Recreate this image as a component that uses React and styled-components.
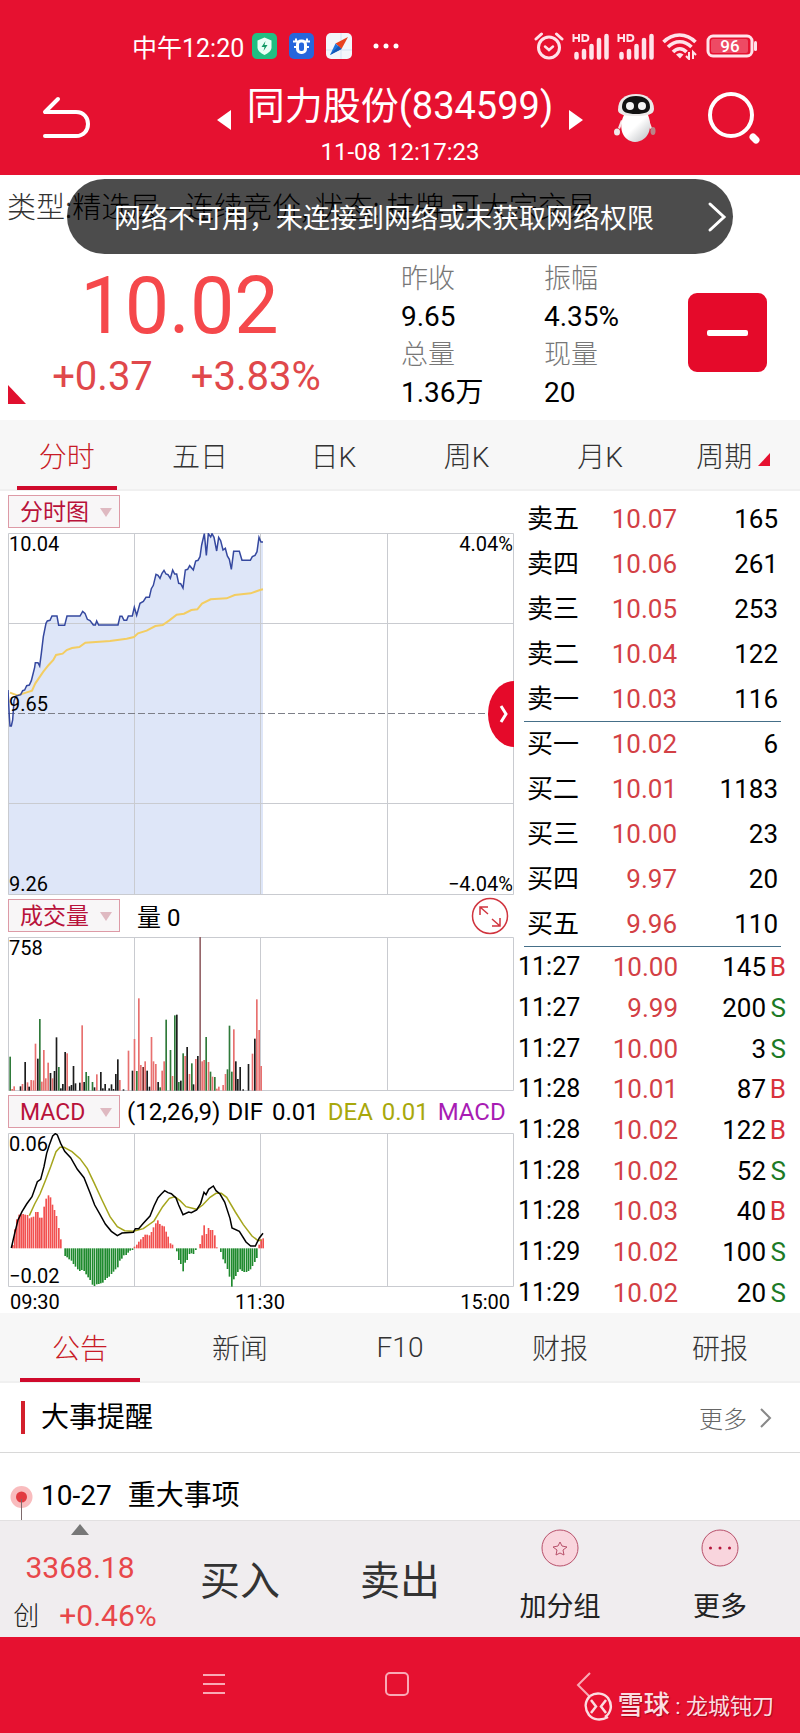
import React from 'react'
import styled, { createGlobalStyle, css } from 'styled-components'

const GlobalStyle = createGlobalStyle`
  * {
    box-sizing: border-box;
  }
  body {
    margin: 0;
    background-color: #fff;
    color: #000;
    font-family: Roboto, 'Noto Sans CJK SC', sans-serif;
    font-size: 28px;
  }
  button, select {
    margin: 0;
    padding: 0;
    border: 0;
    background: none;
    color: inherit;
    font: inherit;
  }
  svg {
    display: block;
    flex-shrink: 0;
  }
`

const RED = '#e61130'
const RISE = '#f5484b'
const PRICE = '#d34045'

/* header */

const Header = styled.header`
  background-color: ${RED};
  color: #fff;
`

const StatusBar = styled.div`
  display: flex;
  align-items: center;
  height: 76px;
  padding: 16px 42px 0 132px;
  font-size: 25px;
`

const StatusApps = styled.div`
  display: flex;
  align-items: center;
  gap: 12px;
  margin-left: 8px;
  flex: 1;
`

const StatusSignals = styled.div`
  display: flex;
  align-items: center;
  gap: 8px;
`

const TitleBar = styled.div`
  display: grid;
  grid-template-columns: 1fr auto 1fr;
  height: 99px;
`

const TitleSide = styled.div`
  display: flex;
  align-items: center;
  justify-content: space-between;
  padding: 0 40px 16px 41px;
`

const TitleRight = styled(TitleSide)`
  padding-left: 30px;
`

const StockNav = styled.div`
  display: flex;
  align-items: flex-start;
  gap: 16px;
`

const StepButton = styled.button`
  margin-top: 34px;
`

const StockTitle = styled.div`
  padding-top: 7px;
  text-align: center;
`

const StockName = styled.h1`
  margin: 0;
  font-size: 38px;
  font-weight: 400;
  line-height: 46px;
`

const StockTime = styled.div`
  font-size: 24px;
  line-height: 46px;
`

/* quote */

const QuoteArea = styled.section`
  position: relative;
`

const TypeLine = styled.p`
  margin: 0;
  padding: 11px 7px 3px;
  font-family: 'Noto Sans CJK SC', sans-serif;
  font-size: 29px;
  font-weight: 300;
  line-height: 38px;
  white-space: nowrap;
  span {
    color: #333;
  }
`

const Toast = styled.button`
  position: absolute;
  top: 4px;
  left: 67px;
  right: 67px;
  display: flex;
  align-items: center;
  justify-content: space-between;
  height: 75px;
  padding: 0 6px 0 47px;
  border-radius: 38px;
  background-color: rgba(0, 0, 0, 0.7);
  color: #fff;
  font-size: 27px;
  white-space: nowrap;
`

const Quote = styled.div`
  display: flex;
  height: 193px;
  padding-right: 33px;
`

const PriceBlock = styled.div`
  position: relative;
  flex: 1;
  display: flex;
  flex-direction: column;
  align-items: center;
  padding: 36px 42px 0 0;
  color: ${RISE};
`

const Price = styled.strong`
  font-size: 79px;
  font-weight: 400;
  line-height: 86px;
`

const Change = styled.div`
  display: flex;
  gap: 38px;
  margin-left: 14px;
  font-size: 40px;
  line-height: 56px;
  color: #e0484b;
`

const Corner = styled.svg`
  position: absolute;
  left: 8px;
  bottom: 16px;
`

const Stats = styled.dl`
  display: grid;
  grid-template-columns: 143px 144px;
  grid-auto-rows: 76px;
  margin: 0;
  padding-top: 33px;
  line-height: 38px;
`

const StatLabel = styled.dt`
  color: #777;
  font-size: 27px;
  font-weight: 300;
`

const StatValue = styled.dd`
  margin: 0;
`

const RemoveButton = styled.button`
  display: flex;
  align-items: center;
  justify-content: center;
  width: 79px;
  height: 79px;
  margin-top: 66px;
  border-radius: 9px;
  background-color: #e50a2a;
`

/* tabs */

const TabBar = styled.nav`
  display: grid;
  grid-template-columns: repeat(${({ $count }) => $count}, 1fr);
  height: ${({ $height }) => $height}px;
  background-color: #f7f7f7;
  border-bottom: 2px solid #f0f0f0;
`

const Tab = styled.button`
  position: relative;
  display: flex;
  align-items: center;
  justify-content: center;
  gap: 6px;
  color: ${({ $active }) => ($active ? '#c81a26' : '#333')};
  font-weight: 300;
  ${({ $active }) =>
    $active &&
    css`
      &::after {
        content: '';
        position: absolute;
        left: 12.5%;
        right: 12.5%;
        bottom: -1px;
        height: 4px;
        background-color: #cf0a2c;
      }
    `}
`

/* charts */

const Market = styled.main`
  display: flex;
`

const Charts = styled.section`
  flex: 1;
  min-width: 0;
  padding-left: 8px;
`

const ChartHead = styled.div`
  display: flex;
  align-items: center;
  height: 33px;
  margin: 4px 0 5px;
  font-size: 23px;
  white-space: nowrap;
`

const Picker = styled.label`
  position: relative;
  width: 112px;
  height: 33px;
  border: 1px solid #dd9aa6;
  background-color: #f8f6f7;
  color: #b8123a;
  select {
    appearance: none;
    width: 100%;
    height: 31px;
    padding: 2px 0 0 11px;
  }
  svg {
    position: absolute;
    top: 12px;
    right: 7px;
    pointer-events: none;
  }
`

const Readout = styled.span`
  margin-left: ${({ $gap }) => $gap || 9}px;
  color: ${({ $color }) => $color || '#000'};
  font-size: 24px;
`

const ExpandButton = styled.button`
  margin-left: auto;
  margin-right: 5px;
`

const Plot = styled.div`
  position: relative;
  height: ${({ $height }) => $height}px;
  > svg {
    width: 100%;
    height: 100%;
  }
`

const edges = {
  top: css`
    top: 1px;
  `,
  middle: css`
    bottom: 50%;
  `,
  bottom: css`
    bottom: 1px;
  `,
}

const AxisLabel = styled.span`
  position: absolute;
  ${({ $edge }) => edges[$edge]}
  ${({ $right }) => ($right ? 'right: 1px;' : 'left: 1px;')}
  font-size: 20px;
  line-height: 20px;
`

const Handle = styled.button`
  position: absolute;
  right: 0;
  top: 50%;
  display: flex;
  align-items: center;
  justify-content: center;
  width: 26px;
  height: 66px;
  padding-left: 6px;
  margin-top: -33px;
  border-radius: 26px 0 0 26px / 33px 0 0 33px;
  background-color: #e50a2a;
`

const TimeAxis = styled.div`
  display: grid;
  grid-template-columns: 1fr 1fr 1fr;
  padding: 4px 4px 0 2px;
  font-size: 20px;
  line-height: 22px;
  span:nth-child(2) {
    text-align: center;
  }
  span:nth-child(3) {
    text-align: right;
  }
`

/* order book */

const Book = styled.section`
  flex: 0 0 286px;
  padding-top: 6px;
  font-size: 26px;
`

const Table = styled.table`
  table-layout: fixed;
  border-collapse: collapse;
  line-height: 30px;
  td, th {
    padding: 0;
    font-weight: 400;
    text-align: right;
  }
  th {
    text-align: left;
  }
`

const Orders = styled(Table)`
  width: 257px;
  height: 225px;
  margin-left: 10px;
  border-bottom: 1px solid #456f88;
  th {
    width: 60px;
    padding-left: 3px;
  }
  td:last-child {
    padding-right: 3px;
  }
`

const Trades = styled(Table)`
  width: 268px;
  height: 366px;
  margin-left: 4px;
  th {
    width: 67px;
    font-size: 25px;
  }
`

const PriceCell = styled.td`
  width: 93px;
  color: ${PRICE};
`

const SideCell = styled.td`
  width: 20px;
  color: ${({ $side }) => ($side === 'B' ? '#d8333c' : '#1c7a26')};
`

/* events */

const EventHead = styled.div`
  display: flex;
  align-items: center;
  height: 70px;
  padding: 0 28px 0 21px;
  border-bottom: 1px solid #d8d8d8;
`

const EventTitle = styled.h2`
  flex: 1;
  margin: 0;
  padding-left: 16px;
  border-left: 4px solid #d3202c;
  font-size: 28px;
  font-weight: 400;
  line-height: 33px;
`

const MoreLink = styled.a`
  display: flex;
  align-items: center;
  gap: 12px;
  color: #666;
  font-size: 24px;
  font-weight: 300;
  text-decoration: none;
`

const EventItem = styled.div`
  display: flex;
  align-items: flex-end;
  gap: 8px;
  height: 67px;
  padding-left: 10px;
  line-height: 48px;
  time {
    margin-right: 8px;
  }
`

/* bottom */

const ActionBar = styled.footer`
  display: grid;
  grid-template-columns: repeat(5, 1fr);
  height: 117px;
  background-color: #f0edef;
  border-top: 1px solid #e2e0e1;
`

const IndexButton = styled.button`
  display: flex;
  flex-direction: column;
  align-items: center;
  padding-top: 3px;
  color: #e8474a;
  font-size: 30px;
  line-height: 44px;
  b {
    padding-top: 11px;
    font-weight: 400;
  }
`

const IndexChange = styled.span`
  display: flex;
  gap: 20px;
  margin-left: 10px;
  padding-top: 4px;
  small {
    color: #222;
    font-size: 26px;
    font-weight: 300;
  }
`

const TradeButton = styled.button`
  padding-bottom: 3px;
  color: #333;
  font-size: 40px;
`

const ToolButton = styled.button`
  display: flex;
  flex-direction: column;
  align-items: center;
  padding-top: 8px;
  font-size: 27px;
  line-height: 40px;
  gap: 20px;
  color: #222;
`

const SystemNav = styled.div`
  position: relative;
  display: flex;
  height: 96px;
  padding: 34px 208px 0 202px;
  justify-content: space-between;
  align-items: flex-start;
  background-color: ${RED};
`

const Watermark = styled.div`
  position: absolute;
  right: 26px;
  bottom: 10px;
  display: flex;
  align-items: center;
  gap: 5px;
  color: #fbdde1;
  font-size: 22px;
  line-height: 32px;
  text-shadow: 1px 1px 1px rgba(90, 0, 10, 0.5);
  b {
    font-size: 26px;
    font-weight: 500;
  }
`

/* [x, top] pairs, three units to a pixel */
const priceLine =
  '24,600 28,680 30,708 34,708 38,690 42,632 48,618 62,614 68,602 74,600 80,587 88,585 94,572 104,532 106,518 114,518 119,528 124,490 130,440 138,400 142,393 150,391 156,378 171,378 176,406 194,406 201,378 240,378 248,364 255,370 262,388 270,392 280,405 286,405 290,393 296,405 354,405 360,379 366,379 372,391 380,391 385,378 397,378 403,352 410,376 420,340 430,334 438,322 448,322 454,296 460,286 468,253 474,256 480,265 486,250 492,241 498,252 504,254 511,265 518,240 524,252 530,252 536,280 542,281 549,294 556,240 563,238 569,227 580,240 587,213 594,211 600,200 605,165 613,131 619,196 625,131 632,141 636,131 642,142 650,183 656,142 662,152 669,180 676,175 682,198 688,208 694,238 701,184 718,184 726,211 751,211 757,200 765,196 771,185 777,142 783,156 789,156'

const averageLine =
  '30,608 52,616 78,608 96,602 106,580 130,545 146,525 160,510 168,495 188,491 200,480 216,474 238,471 256,458 330,453 380,446 402,441 414,430 440,422 466,408 488,405 508,391 530,374 552,371 574,360 592,358 606,341 632,328 680,325 704,315 752,310 780,300 789,298'

const difLine =
  '34,474 44,430 54,390 66,365 80,342 96,320 112,275 122,268 132,230 140,190 148,165 158,138 166,131 172,135 182,160 194,184 212,203 232,238 252,263 270,308 284,345 300,373 316,402 334,424 352,437 366,429 400,427 406,416 416,416 430,400 450,378 462,348 474,323 484,312 494,302 504,308 514,311 528,324 536,345 549,374 566,366 574,368 590,360 602,340 612,307 618,314 626,298 640,288 648,302 660,312 674,336 690,385 696,414 718,424 738,456 752,468 766,468 778,444 789,430'

const deaLine =
  '88,377 104,342 120,312 136,272 152,230 168,185 180,172 192,172 216,185 240,206 262,236 282,278 306,330 330,380 352,410 374,422 400,424 430,416 462,393 488,350 508,325 524,320 540,332 558,350 590,358 608,345 630,322 648,310 664,310 680,322 706,366 730,404 756,438 774,452 784,450'

const volumeColors = { r: '#e8706f', g: '#2f7a3a', k: '#1c1c1c', d: '#7a2a2a', m: '#96666a' }

const volumes =
  '30,500g 36,597r 42,589r 61,589k 67,582r 75,516k 82,577r 87,590k 93,570r 100,571r 106,461r 113,506k 119,387g 125,575r 131,480r 137,565r 144,518r 151,549k 157,565r 163,543k 169,442k 176,531g 182,595k 188,582k 195,486k 201,490r 208,589k 214,585k 220,528k 226,580k 239,578k 246,406r 252,576k 258,546g 265,558g 277,576g 283,592k 290,553r 302,546k 308,595k 315,582k 327,595k 334,583k 340,597k 347,552k 353,508k 359,570r 370,598k 385,482r 397,542k 403,447r 410,543g 416,325r 422,525r 429,531d 435,514r 441,542k 448,590k 454,441r 460,514r 467,522r 474,576k 480,592g 486,542r 492,514r 498,389g 511,480g 517,558r 524,376g 530,374k 536,576g 542,572k 549,490g 555,498r 561,471k 568,552r 575,520g 580,583k 587,507r 593,498k 600,141m 606,514r 612,510r 618,441g 625,516r 631,545g 637,560r 644,561g 650,596r 656,590r 669,585r 676,552r 682,538g 688,407g 695,545g 701,418r 707,514k 713,567k 720,531k 729,598k 745,522k 757,491r 764,446k 770,328r 777,420r 783,528r'
    .split(' ')
    .map((item) => {
      const [x, rest] = item.split(',')
      return { x: Number(x), y: parseInt(rest, 10), color: volumeColors[rest.slice(-1)] }
    })

const macdBars =
  '38,465 44,418 50,388 57,374 63,373 69,372 75,374 82,375 88,385 94,382 100,380 107,366 113,366 119,383 125,383 132,350 138,326 145,316 151,322 157,344 163,360 169,378 176,414 182,448 195,498 201,502 207,508 214,512 220,522 226,530 233,538 239,543 245,540 252,543 258,553 264,562 270,570 277,584 283,588 290,583 296,582 302,580 308,578 315,570 321,564 327,560 334,552 340,545 346,538 353,532 359,512 365,506 371,496 378,495 384,488 390,482 397,480 403,470 410,464 416,455 422,448 429,441 435,434 441,434 448,436 454,426 460,412 467,400 473,391 479,402 486,407 492,409 498,425 504,440 511,460 517,464 530,484 536,510 542,522 549,544 555,518 561,510 568,492 574,490 580,492 587,480 600,462 606,436 612,406 619,432 625,414 631,420 637,420 644,436 650,472 662,486 669,508 675,520 682,537 688,560 695,590 701,568 707,558 713,546 720,538 726,543 732,546 739,546 745,543 751,538 757,528 764,516 770,504 777,464 783,448 789,445'
    .split(' ')
    .map((item) => item.split(',').map(Number))

const MACD_ZERO = 475

const asks = [
  ['卖五', '10.07', '165'],
  ['卖四', '10.06', '261'],
  ['卖三', '10.05', '253'],
  ['卖二', '10.04', '122'],
  ['卖一', '10.03', '116'],
]

const bids = [
  ['买一', '10.02', '6'],
  ['买二', '10.01', '1183'],
  ['买三', '10.00', '23'],
  ['买四', '9.97', '20'],
  ['买五', '9.96', '110'],
]

const trades = [
  ['11:27', '10.00', '145', 'B'],
  ['11:27', '9.99', '200', 'S'],
  ['11:27', '10.00', '3', 'S'],
  ['11:28', '10.01', '87', 'B'],
  ['11:28', '10.02', '122', 'B'],
  ['11:28', '10.02', '52', 'S'],
  ['11:28', '10.03', '40', 'B'],
  ['11:29', '10.02', '100', 'S'],
  ['11:29', '10.02', '20', 'S'],
]

const stats = [
  ['昨收', '9.65'],
  ['振幅', '4.35%'],
  ['总量', '1.36万'],
  ['现量', '20'],
]

const periods = ['分时', '五日', '日K', '周K', '月K', '周期']
const sections = ['公告', '新闻', 'F10', '财报', '研报']

function Signal() {
  return (
    <svg width="37" height="28" viewBox="0 0 37 28" fill="none" stroke="#ffe3ea">
      <path d="M1.5 2v8M7 2v8M1.5 6H7M10.5 3v6h2.5c4.500 0 4.500-6 0-6z" strokeWidth="2" />
      <path d="M4.500 25.500v-3.500M12 25.500v-6.500M19.500 25.500V14M27 25.500V8M34.500 25.500V4" strokeWidth="4.500" strokeLinecap="round" />
    </svg>
  )
}

function StatusIcons() {
  return (
    <StatusSignals>
      <svg width="30" height="28" viewBox="0 0 30 28" fill="none" stroke="#ffe3ea" strokeWidth="3" strokeLinecap="round">
        <circle cx="15" cy="15.500" r="10.500" />
        <path d="M2 7l5.500-5M28 7l-5.500-5" />
        <path d="M11 14.500l4 3.500 4-3.500" strokeWidth="2.500" />
      </svg>
      <Signal />
      <Signal />
      <svg width="36" height="28" viewBox="0 0 36 28" fill="none" stroke="#ffe3ea" strokeWidth="3.500">
        <path d="M1.500 10c9-9.500 23-9.500 32 0" />
        <path d="M6 15c7-7 16.500-7 23.500 0" />
        <path d="M11 20c4-4.500 9.500-4.500 13.500 0" />
        <path d="M14 22.500c2.500-2 5-2 7.500 0L18 26.500z" fill="#ffe3ea" stroke="none" />
        <path d="M27 20v7l-3-3M31 27v-7l3 3" strokeWidth="2" />
      </svg>
      <svg width="52" height="26" viewBox="0 0 52 26" role="img" aria-label="96">
        <rect x="2" y="3" width="44" height="20" rx="5" fill="none" stroke="#ffe3ea" strokeWidth="3" />
        <rect x="5" y="6" width="37" height="14" rx="2" fill="#ee4a64" />
        <path d="M49.500 9.500v7" stroke="#ffe3ea" strokeWidth="3" strokeLinecap="round" />
        <text x="24" y="19" fill="#fff" fontSize="17" fontWeight="500" textAnchor="middle">
          96
        </text>
      </svg>
    </StatusSignals>
  )
}

function AppIcons() {
  return (
    <StatusApps>
      <svg width="25" height="26" viewBox="0 0 25 26">
        <rect width="25" height="26" rx="5" fill="#20bf82" />
        <path d="M12.500 4.500l7 3v7c0 3-3 5.500-7 7.500-4-2-7-4.500-7-7.500v-7z" fill="#e9fff6" />
        <path d="M13.500 8l-4 6h3l-1 4 4-6h-3z" fill="#149a66" />
      </svg>
      <svg width="25" height="26" viewBox="0 0 25 26">
        <rect width="25" height="26" rx="5" fill="#2766dc" />
        <rect x="8.500" y="8" width="8" height="11.500" rx="3.500" fill="none" stroke="#fff" strokeWidth="3" />
        <path d="M4 8.500h5M16 8.500h5M7 9V5.500M18 9V5.500M5 14h3M17 14h3" stroke="#fff" strokeWidth="2" />
      </svg>
      <svg width="26" height="26" viewBox="0 0 26 26">
        <rect width="26" height="26" rx="5" fill="#f2f6fb" />
        <path d="M15 0v26M0 17h26" stroke="#d3e2f2" />
        <path d="M22 4L9.500 10.500l6 5.500z" fill="#e8431f" />
        <path d="M4 22l5.500-11.500 6 5.500z" fill="#1c74dd" />
        <path d="M4 22l8.500-9 3 3z" fill="#1556b4" />
      </svg>
      <svg width="38" height="26" viewBox="0 0 38 26" fill="#fff">
        <circle cx="12" cy="13" r="2.500" />
        <circle cx="22" cy="13" r="2.500" />
        <circle cx="32" cy="13" r="2.500" />
      </svg>
    </StatusApps>
  )
}

function Robot() {
  return (
    <svg width="44" height="50" viewBox="0 0 44 50">
      <defs>
        <linearGradient id="shell" x1="0" y1="0" x2="1" y2="1">
          <stop offset="0.45" stopColor="#fff" />
          <stop offset="1" stopColor="#b9bcc0" />
        </linearGradient>
      </defs>
      <path d="M5 35l3-8 2 1-3 8zM39 35l-3-8-2 1 3 8z" fill="#f7e4e6" />
      <ellipse cx="4" cy="39" rx="3" ry="3.500" fill="#f0eaea" />
      <ellipse cx="40" cy="38" rx="2.500" ry="4" fill="#b98488" />
      <path d="M11 22h24c5 12 1 26-13 27C9 48 5 34 11 22z" fill="url(#shell)" />
      <path d="M5 17C5 6 12 1 23 1s18 6 18 15c0 6-8 7-18 7S5 22 5 17z" fill="#ece9e9" />
      <path d="M9 14c0-7 5-11 14-11s14 4 14 11c0 5-5 7-14 7S9 19 9 14z" fill="#121212" />
      <circle cx="17" cy="13" r="4" fill="#f4f4f4" />
      <circle cx="29" cy="13" r="4" fill="#f4f4f4" />
    </svg>
  )
}

function Grid({ top, height }) {
  const bottom = top + height
  return (
    <g stroke="#c9cbd0" fill="none">
      <path vectorEffect="non-scaling-stroke" d={`M25.500 ${top + 1.5}H1540.500V${bottom - 1.5}H25.500Z`} />
      <path vectorEffect="non-scaling-stroke" d={`M403.500 ${top}V${bottom}M781.500 ${top}V${bottom}M1162.500 ${top}V${bottom}`} />
    </g>
  )
}

function IndicatorPicker({ name, options }) {
  return (
    <Picker>
      <select aria-label={name} defaultValue={options[0]}>
        {options.map((option) => (
          <option key={option}>{option}</option>
        ))}
      </select>
      <svg width="12" height="9">
        <path d="M0 0h12L6 9z" fill="#dfb9c1" />
      </svg>
    </Picker>
  )
}

function OrderRows({ rows }) {
  return (
    <Orders>
      <tbody>
        {rows.map(([label, price, amount]) => (
          <tr key={label}>
            <th scope="row">{label}</th>
            <PriceCell>{price}</PriceCell>
            <td>{amount}</td>
          </tr>
        ))}
      </tbody>
    </Orders>
  )
}

function PriceChart() {
  return (
    <Plot $height={362}>
      <svg viewBox="24 129 1518 1086" preserveAspectRatio="none">
        <polygon points={`24,1215 ${priceLine} 789,1215`} fill="#dee6f8" />
        <Grid top={129} height={1086} />
        <path d="M24 400.500H1540M24 940.500H1540" stroke="#c9cbd0" vectorEffect="non-scaling-stroke" />
        <path d="M24 670.500H1540" stroke="#7d7f88" strokeDasharray="7 3" vectorEffect="non-scaling-stroke" />
        <polyline points={averageLine} fill="none" stroke="#f3cd62" strokeWidth="2" vectorEffect="non-scaling-stroke" />
        <polyline points={priceLine} fill="none" stroke="#35489f" strokeWidth="1.500" vectorEffect="non-scaling-stroke" />
      </svg>
      <AxisLabel $edge="top">10.04</AxisLabel>
      <AxisLabel $edge="middle">9.65</AxisLabel>
      <AxisLabel $edge="bottom">9.26</AxisLabel>
      <AxisLabel $edge="top" $right>
        4.04%
      </AxisLabel>
      <AxisLabel $edge="bottom" $right>
        −4.04%
      </AxisLabel>
      <Handle aria-label="展开">
        <svg width="10" height="18" fill="none" stroke="#fff" strokeWidth="3">
          <path d="M2 1l5 8-5 8" />
        </svg>
      </Handle>
    </Plot>
  )
}

function VolumeChart() {
  return (
    <Plot $height={154}>
      <svg viewBox="24 141 1518 462" preserveAspectRatio="none">
        <Grid top={141} height={462} />
        {volumes.map(({ x, y, color }) => (
          <rect key={x} x={x - 2} y={y} width="5" height={602 - y} fill={color} />
        ))}
      </svg>
      <AxisLabel $edge="top">758</AxisLabel>
    </Plot>
  )
}

function MacdChart() {
  return (
    <Plot $height={154}>
      <svg viewBox="24 129 1518 462" preserveAspectRatio="none">
        <Grid top={129} height={462} />
        {macdBars.map(([x, y]) => (
          <rect
            key={x}
            x={x - 2}
            y={Math.min(y, MACD_ZERO)}
            width="5"
            height={Math.abs(MACD_ZERO - y)}
            fill={y < MACD_ZERO ? '#f2504f' : '#1f8a2e'}
          />
        ))}
        <polyline points={deaLine} fill="none" stroke="#a5a51c" strokeWidth="1.500" vectorEffect="non-scaling-stroke" />
        <polyline points={difLine} fill="none" stroke="#000" strokeWidth="1.500" vectorEffect="non-scaling-stroke" />
      </svg>
      <AxisLabel $edge="top">0.06</AxisLabel>
      <AxisLabel $edge="bottom">−0.02</AxisLabel>
    </Plot>
  )
}

function App() {
  return (
    <>
      <GlobalStyle />
      <Header>
        <StatusBar>
          中午12:20
          <AppIcons />
          <StatusIcons />
        </StatusBar>
        <TitleBar>
          <TitleSide>
            <button aria-label="返回">
              <svg width="50" height="44" viewBox="0 0 50 44" fill="none" stroke="#fff" strokeWidth="4" strokeLinecap="round" strokeLinejoin="round">
                <path d="M17 3L4 16h31c16 0 16 24 0 24H4" />
              </svg>
            </button>
          </TitleSide>
          <StockNav>
            <StepButton aria-label="上一只">
              <svg width="14" height="20">
                <path d="M14 0v20L0 10z" fill="#fff" />
              </svg>
            </StepButton>
            <StockTitle>
              <StockName>同力股份(834599)</StockName>
              <StockTime>11-08 12:17:23</StockTime>
            </StockTitle>
            <StepButton aria-label="下一只">
              <svg width="14" height="20">
                <path d="M0 0v20l14-10z" fill="#fff" />
              </svg>
            </StepButton>
          </StockNav>
          <TitleRight>
            <button aria-label="智能助手">
              <Robot />
            </button>
            <button aria-label="搜索">
              <svg width="52" height="52" viewBox="0 0 52 52" fill="none" stroke="#fff" strokeLinecap="round">
                <circle cx="23" cy="23" r="21" strokeWidth="4" />
                <path d="M45 45l3 3" strokeWidth="7" />
              </svg>
            </button>
          </TitleRight>
        </TitleBar>
      </Header>

      <QuoteArea>
        <TypeLine>
          <span>类型:</span>精选层—连续竞价, 状态: 挂牌 可大宗交易
        </TypeLine>
        <Quote>
          <PriceBlock>
            <Price>10.02</Price>
            <Change>
              <span>+0.37</span>
              <span>+3.83%</span>
            </Change>
            <Corner width="18" height="19">
              <path d="M0 0v19h18z" fill="#e0102e" />
            </Corner>
          </PriceBlock>
          <Stats>
            {stats.map(([label, value]) => (
              <div key={label}>
                <StatLabel>{label}</StatLabel>
                <StatValue>{value}</StatValue>
              </div>
            ))}
          </Stats>
          <RemoveButton aria-label="删除自选">
            <svg width="41" height="6">
              <rect width="41" height="6" rx="2" fill="#fff" />
            </svg>
          </RemoveButton>
        </Quote>
        <Toast>
          网络不可用，未连接到网络或未获取网络权限
          <svg width="20" height="32" fill="none" stroke="#fff" strokeWidth="3" strokeLinecap="round">
            <path d="M3 3l14 13L3 29" />
          </svg>
        </Toast>
      </QuoteArea>

      <TabBar $count={6} $height={71}>
        {periods.map((name, i) => (
          <Tab key={name} $active={i === 0}>
            {name}
            {name === '周期' && (
              <svg width="12" height="24">
                <path d="M12 10v13H0z" fill="#e61130" />
              </svg>
            )}
          </Tab>
        ))}
      </TabBar>

      <Market>
        <Charts>
          <ChartHead>
            <IndicatorPicker name="走势图" options={['分时图']} />
          </ChartHead>
          <PriceChart />
          <ChartHead>
            <IndicatorPicker name="副图一" options={['成交量']} />
            <Readout $gap={17}>量 0</Readout>
            <ExpandButton aria-label="全屏">
              <svg width="38" height="38" viewBox="0 0 38 38" fill="none" stroke="#d0353f">
                <circle cx="19" cy="19" r="17.500" strokeWidth="1.500" />
                <path d="M17 17L9 10M9 18v-8h8M21 22l8 7M29 21v8h-8" strokeWidth="1.500" />
              </svg>
            </ExpandButton>
          </ChartHead>
          <VolumeChart />
          <ChartHead>
            <IndicatorPicker name="副图二" options={['MACD']} />
            <Readout $gap={7}>(12,26,9)</Readout>
            <Readout $gap={7}>DIF</Readout>
            <Readout>0.01</Readout>
            <Readout $color="#a8a80c">DEA</Readout>
            <Readout $color="#a8a80c">0.01</Readout>
            <Readout $color="#a81cb4">MACD</Readout>
          </ChartHead>
          <MacdChart />
          <TimeAxis>
            <span>09:30</span>
            <span>11:30</span>
            <span>15:00</span>
          </TimeAxis>
        </Charts>

        <Book>
          <OrderRows rows={asks} />
          <OrderRows rows={bids} />
          <Trades>
            <tbody>
              {trades.map(([time, price, amount, side], i) => (
                <tr key={i}>
                  <th scope="row">{time}</th>
                  <PriceCell>{price}</PriceCell>
                  <td>{amount}</td>
                  <SideCell $side={side}>{side}</SideCell>
                </tr>
              ))}
            </tbody>
          </Trades>
        </Book>
      </Market>

      <TabBar $count={5} $height={70}>
        {sections.map((name, i) => (
          <Tab key={name} $active={i === 0}>
            {name}
          </Tab>
        ))}
      </TabBar>

      <EventHead>
        <EventTitle>大事提醒</EventTitle>
        <MoreLink href="#more">
          更多
          <svg width="13" height="20" fill="none" stroke="#888" strokeWidth="2">
            <path d="M2 1l9 9-9 9" />
          </svg>
        </MoreLink>
      </EventHead>
      <EventItem>
        <svg width="23" height="35" viewBox="0 0 23 35">
          <circle cx="11.500" cy="12" r="11" fill="#f9bcbe" />
          <circle cx="11.500" cy="12" r="5.500" fill="#e23b41" />
          <path d="M11.500 14v21" stroke="#7d6a6c" />
        </svg>
        <time>10-27</time>
        重大事项
      </EventItem>

      <ActionBar>
        <IndexButton>
          <svg width="18" height="11">
            <path d="M9 0l9 11H0z" fill="#777" />
          </svg>
          <b>3368.18</b>
          <IndexChange>
            <small>创</small>
            +0.46%
          </IndexChange>
        </IndexButton>
        <TradeButton>买入</TradeButton>
        <TradeButton>卖出</TradeButton>
        <ToolButton>
          <svg width="38" height="38" viewBox="0 0 38 38" stroke="#b8506a">
            <circle cx="19" cy="19" r="18" fill="#f9d5dd" />
            <path d="M19 13l2 4 5 1-4 3 1 5-4-2-4 2 1-5-4-3 5-1z" fill="none" strokeLinejoin="round" />
          </svg>
          加分组
        </ToolButton>
        <ToolButton>
          <svg width="38" height="38" viewBox="0 0 38 38">
            <circle cx="19" cy="19" r="18" fill="#f9d5dd" stroke="#b8506a" />
            <g fill="#b3173c">
              <circle cx="9.500" cy="19" r="1.500" />
              <circle cx="19" cy="19" r="1.500" />
              <circle cx="28.500" cy="19" r="1.500" />
            </g>
          </svg>
          更多
        </ToolButton>
      </ActionBar>

      <SystemNav>
        <button aria-label="任务">
          <svg width="24" height="26" stroke="#f9a9b5" strokeWidth="2">
            <path d="M1 4h22M1 13h22M1 22h22" />
          </svg>
        </button>
        <button aria-label="主屏">
          <svg width="26" height="26" fill="none" stroke="#f9a9b5" strokeWidth="2">
            <rect x="2" y="2" width="22" height="22" rx="4" />
          </svg>
        </button>
        <button aria-label="后退">
          <svg width="24" height="28" fill="none" stroke="#f9a9b5" strokeWidth="2">
            <path d="M22 2L10 14l12 12" />
          </svg>
        </button>
        <Watermark>
          <svg width="29" height="29" viewBox="0 0 29 29" fill="none" stroke="#fbdde1" strokeWidth="2.500">
            <path d="M6 4C12 0 20 1 24 6c5 7 3 15-3 19" />
            <path d="M24 25C17 29 9 28 5 23 0 16 1 9 6 4" />
            <path d="M7 8l5 6.500L7 21M22 8l-5 6.500 5 6.500" />
          </svg>
          <span>
            <b>雪球</b> : 龙城钝刀
          </span>
        </Watermark>
      </SystemNav>
    </>
  )
}

export default App
